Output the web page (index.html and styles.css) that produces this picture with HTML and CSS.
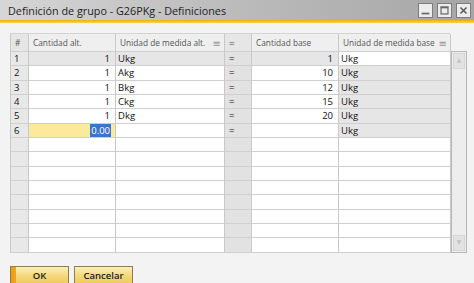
FILE: index.html
```html
<!DOCTYPE html>
<html lang="es">
<head>
  <meta charset="UTF-8">
  <title>Definición de grupo - G26PKg - Definiciones</title>
  <link rel="stylesheet" href="styles.css">
</head>
<body>
  <div class="window">
    <div class="titlebar">
      <span class="title">Definición de grupo - G26PKg - Definiciones</span>
      <div class="controls">
        <span class="ctl"><svg width="15" height="15" viewBox="0 0 15 15"><rect x="3" y="10" width="9" height="2" fill="#6a6a6a"/></svg></span>
        <span class="ctl"><svg width="15" height="15" viewBox="0 0 15 15"><rect x="3.5" y="3.5" width="8" height="8" fill="none" stroke="#6a6a6a" stroke-width="1.4"/><rect x="3" y="3" width="9" height="2" fill="#6a6a6a"/></svg></span>
        <span class="ctl"><svg width="15" height="15" viewBox="0 0 15 15"><path d="M4 4 L11 11 M11 4 L4 11" stroke="#5a5a5a" stroke-width="1.8"/></svg></span>
      </div>
    </div>
    <div class="accent"></div>

    <div class="content">
      <div class="gridwrap">
        <div class="grid" id="grid">
          <div class="hd num">#</div>
          <div class="hd">Cantidad alt.</div>
          <div class="hd menu">Unidad de medida alt. <span class="ham">&#8801;</span></div>
          <div class="hd eq">=</div>
          <div class="hd">Cantidad base</div>
          <div class="hd menu">Unidad de medida base <span class="ham">&#8801;</span></div>
        </div>
        <div class="scroll">
          <div class="sbtn">&#9650;</div>
          <div class="sbtn">&#9660;</div>
        </div>
      </div>

      <div class="buttons">
        <button class="btn ok">OK</button>
        <button class="btn">Cancelar</button>
      </div>
    </div>
  </div>

  <script>
    let rows = [
      { alt: '1', unit: 'Ukg', base: '1', bunit: 'Ukg', first: true },
      { alt: '1', unit: 'Akg', base: '10', bunit: 'Ukg' },
      { alt: '1', unit: 'Bkg', base: '12', bunit: 'Ukg' },
      { alt: '1', unit: 'Ckg', base: '15', bunit: 'Ukg' },
      { alt: '1', unit: 'Dkg', base: '20', bunit: 'Ukg' },
      { alt: '0.00', unit: '', base: '', bunit: 'Ukg', edit: true }
    ];
    let grid = document.getElementById('grid');

    function cell(cls, html) {
      let d = document.createElement('div');
      d.className = 'c ' + cls;
      d.innerHTML = html;
      grid.appendChild(d);
    }

    for (let i = 0; i < 14; i++) {
      let r = rows[i];
      if (!r) {
        cell('num', '');
        cell('', ''); cell('', ''); cell('eq', ''); cell('', ''); cell('', '');
        continue;
      }
      cell('num', i + 1);
      if (r.edit) cell('right active', '<span class="sel">' + r.alt + '</span>');
      else cell('right' + (r.first ? ' gray' : ''), r.alt);
      cell(r.first ? 'gray' : '', r.unit);
      cell('eq', '=');
      cell('right' + (r.first ? ' gray' : ''), r.base);
      cell(r.first ? '' : 'gray', r.bunit);
    }
  </script>
</body>
</html>
```

FILE: styles.css
```css
body { margin: 0; font-family: "Open Sans", "DejaVu Sans", sans-serif; background: #f3f3f3; }
.window { width: 474px; height: 283px; overflow: hidden; background: #f3f3f3; }

.titlebar { height: 20px; display: flex; align-items: center; justify-content: space-between; background: linear-gradient(to right, #d6d6d6, #bdbdbd 45%, #a6a6a6); }
.title { font-size: 10.8px; color: #1e1e1e; padding-left: 8px; }
.controls { display: flex; gap: 4px; padding-right: 3px; }
.ctl { width: 15px; height: 15px; background: #ececec; border: 1px solid #7d7d7d; box-sizing: border-box; display: flex; align-items: center; justify-content: center; }
.ctl svg { width: 13px; height: 13px; }

.accent { height: 3px; background: linear-gradient(to bottom, #f0b000, #f7d25a); }

.content { padding: 10px 0 0 10px; }

.gridwrap { display: flex; align-items: flex-start; }
.grid { display: grid; grid-template-columns: 18px 87px 109px 27px 87px 112px; grid-template-rows: 18px repeat(14, 14.35px); border-left: 1px solid #c9c9c9; border-top: 1px solid #d4d4d4; width: 440px; box-sizing: border-box; background: #fff; }
.hd, .c { border-right: 1px solid #c9c9c9; border-bottom: 1px solid #cfcfcf; box-sizing: border-box; white-space: nowrap; overflow: hidden; }
.hd { background: #efefef; font-size: 8.3px; color: #555; padding: 3px 0 0 4px; }
.hd.menu { position: relative; }
.ham { position: absolute; right: 3px; top: 2px; color: #999; font-size: 10px; }
.hd.num { background: #e6e6e6; }
.hd.eq { background: #e6e6e6; color: #444; font-size: 10px; padding-top: 2px; }

.c { font-size: 9.5px; color: #111; padding: 1px 2px 0 2px; line-height: 12px; }
.c.num { background: #e8e8e8; padding-left: 3px; }
.c.eq { background: #e2e2e2; padding-left: 4px; }
.c.gray { background: #e6e6e6; }
.c.right { text-align: right; padding-right: 5px; }
.c.active { background: #fde99c; padding-right: 4px; }
.sel { background: #3b73d1; color: #fff; padding: 0 1px; }

.scroll { margin-top: 18px; margin-left: 1px; width: 16px; height: 202px; border: 1px solid #b7b7b7; box-sizing: border-box; background: #ededed; display: flex; flex-direction: column; justify-content: space-between; padding: 1px; }
.sbtn { height: 14px; background: #e2e2e2; border: 1px solid #d6d6d6; color: #c4c4c4; font-size: 6px; text-align: center; line-height: 13px; }

.buttons { display: flex; gap: 5px; margin-top: 13px; }
.btn { width: 59px; height: 19px; font-family: "Open Sans", sans-serif; font-size: 9.5px; font-weight: 600; color: #222; border: 1px solid #8c7d52; background: linear-gradient(to bottom, #fbeeb8, #f4d778 55%, #eec95a); padding: 0; cursor: pointer; }
.btn.ok { background: linear-gradient(to right, #ee9a10 0, #f0a820 5px, transparent 5px), linear-gradient(to bottom, #fbeeb8, #f4d778 55%, #eec95a); }
```
